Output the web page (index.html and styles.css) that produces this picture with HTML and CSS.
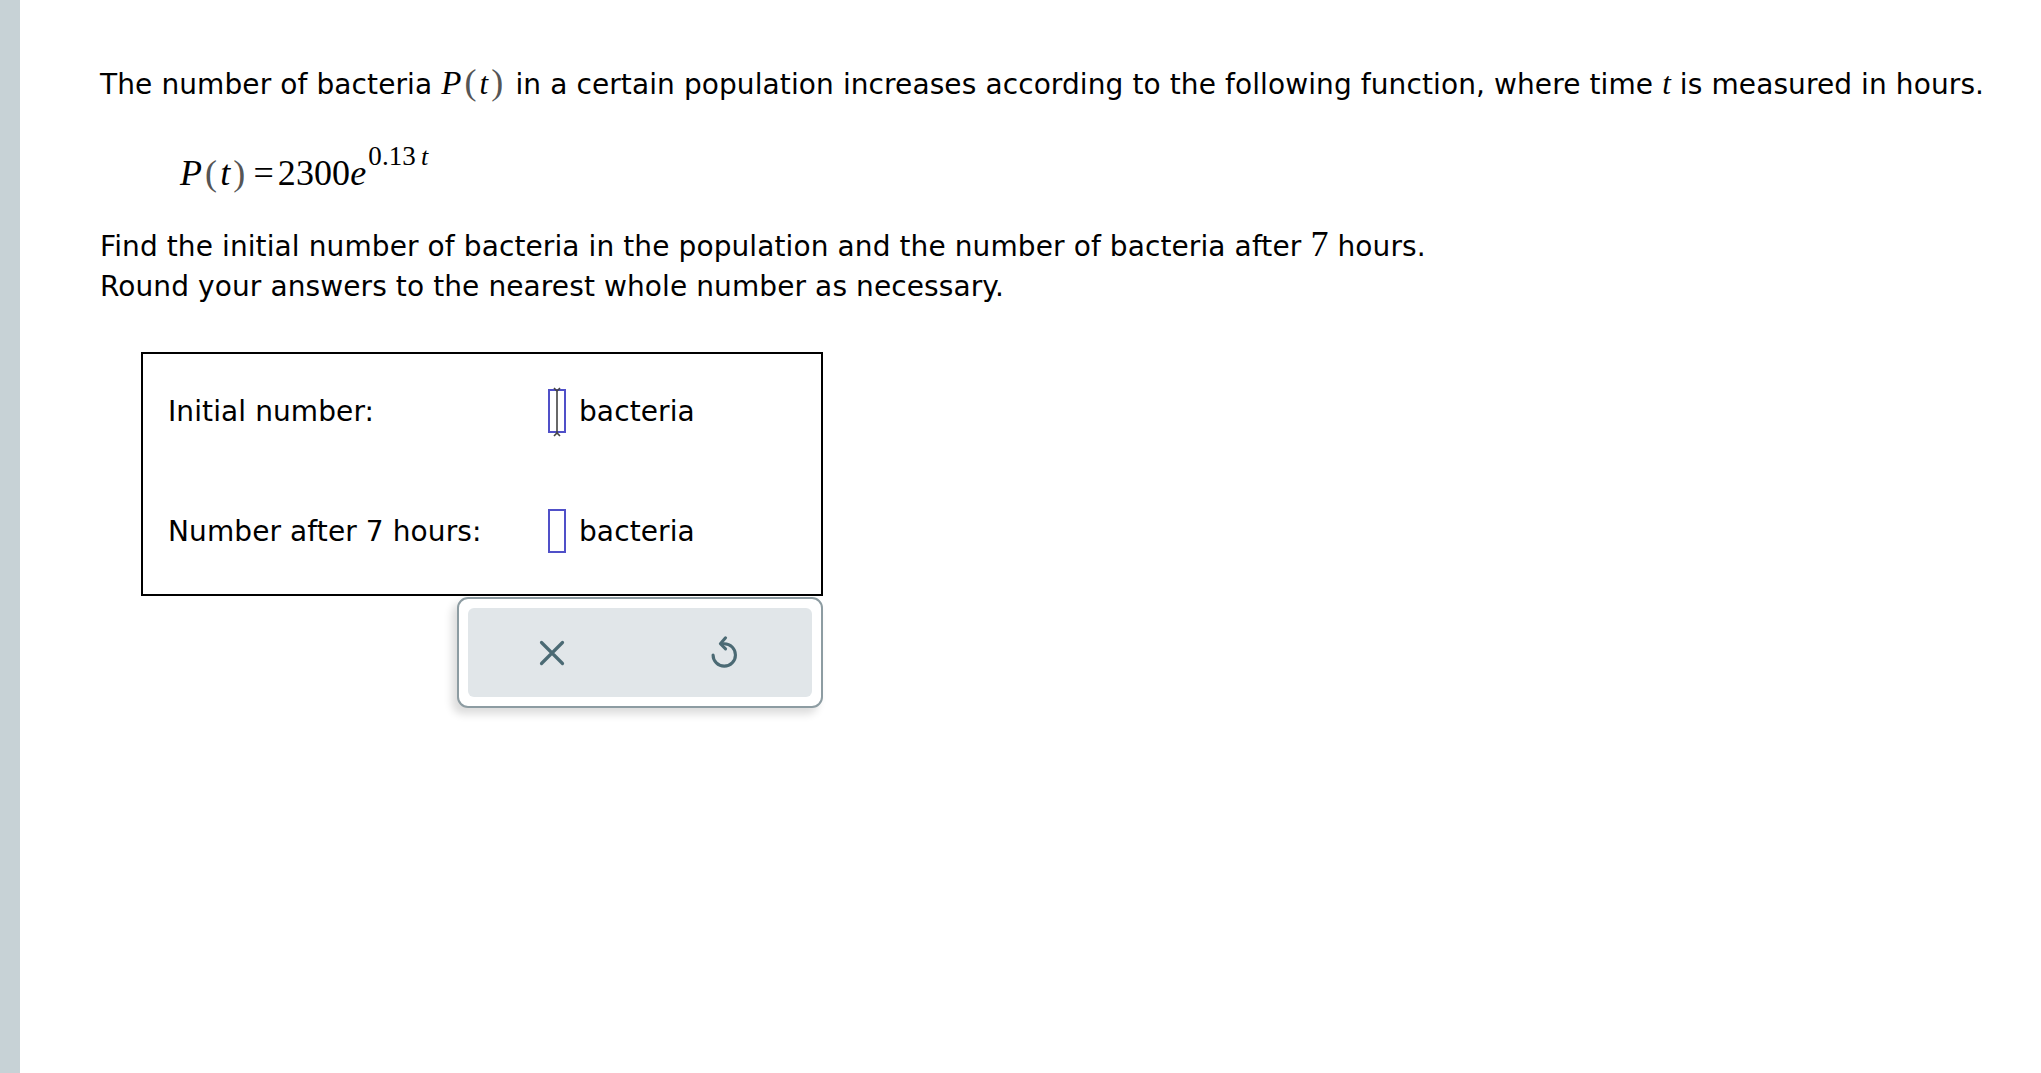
FILE: index.html
```html
<!DOCTYPE html>
<html>
<head>
<meta charset="utf-8">
<link rel="stylesheet" href="styles.css">
</head>
<body>
<div class="sidebar"></div>
<main class="content">
  <p class="line first">The number of bacteria <span class="mi">P</span><span class="paren">(</span><span class="mi t">t</span><span class="paren">)</span> in a certain population increases according to the following function, where time <span class="mi t">t</span> is measured in hours.</p>
  <div class="equation"><span class="eq"><span class="mi">P</span><span class="eparen">(</span><span class="mi">t</span><span class="eparen">)</span><span class="eqsign">=</span>2300<span class="mi">e</span><sup class="sup">0.13<span class="mi">t</span></sup></span></div>
  <p class="line find">Find the initial number of bacteria in the population and the number of bacteria after <span class="mn">7</span> hours.</p>
  <p class="line">Round your answers to the nearest whole number as necessary.</p>
  <div class="answer-area">
    <div class="answer-box">
      <div class="row">
        <span class="label">Initial number:</span>
        <span class="field"><span class="input"></span><svg class="ibeam" width="12" height="50" viewBox="0 0 12 50"><path d="M3 1 L6 4 L9 1 M6 4 V46 M3 49 L6 46 L9 49" stroke="#444" stroke-width="1.6" fill="none"/></svg></span>
        <span class="unit">bacteria</span>
      </div>
      <div class="row">
        <span class="label">Number after 7 hours:</span>
        <span class="field"><span class="input"></span></span>
        <span class="unit">bacteria</span>
      </div>
    </div>
    <div class="panel">
      <div class="panel-inner">
        <button class="btn" aria-label="Clear"><svg width="26" height="26" viewBox="0 0 26 26"><path d="M2.5 2.5 L23.5 23.5 M23.5 2.5 L2.5 23.5" stroke="#4b6a74" stroke-width="3.2" stroke-linecap="round" fill="none"/></svg></button>
        <button class="btn" aria-label="Undo"><svg width="36" height="36" viewBox="0 0 28 28"><path d="M5.5 15.5 A8.7 8.7 0 1 0 14.2 6.8 L12 6.8" stroke="#4b6a74" stroke-width="2.4" stroke-linecap="round" fill="none"/><path d="M15.2 2.2 L11.2 6.8 L15.2 10.8" stroke="#4b6a74" stroke-width="2.4" stroke-linecap="round" stroke-linejoin="round" fill="none"/></svg></button>
      </div>
    </div>
  </div>
</main>
</body>
</html>
```
FILE: styles.css
```css
html, body {
  margin: 0;
  padding: 0;
  background: #ffffff;
}
body {
  display: flex;
  min-height: 1073px;
  font-family: "DejaVu Sans", Verdana, sans-serif;
  font-size: 28px;
  letter-spacing: 0.1px;
  color: #000;
}
.sidebar {
  width: 20px;
  flex: 0 0 20px;
  background: #c7d2d6;
}
.content {
  padding: 62px 0 0 80px;
  flex: 1;
}
.line {
  margin: 0;
  line-height: 40px;
  white-space: nowrap;
}
.mi {
  font-family: "Liberation Serif", "Times New Roman", serif;
  font-style: italic;
  font-size: 33px;
}
.t { font-size: 31px; }
.paren {
  font-family: "Liberation Serif", serif;
  font-size: 36px;
  color: #555;
  margin: 0 3px;
}
.mn {
  font-family: "Liberation Serif", serif;
  font-size: 36px;
}
.equation {
  height: 126px;
  padding-left: 80px;
  padding-top: 35px;
  box-sizing: border-box;
}
.eq {
  font-family: "Liberation Serif", "Times New Roman", serif;
  font-size: 36px;
  display: inline-block;
  line-height: 46px;
}
.eq .mi { font-size: 36px; }
.eparen { color: #555; margin: 0 3px; }
.eqsign { margin: 0 4px 0 5px; }
.sup {
  font-size: 27px;
  position: relative;
  top: -7px;
  margin-left: 2px;
}
.sup .mi { font-size: 26px; margin-left: 5px; }
.find { margin-top: -7px; }
.answer-area {
  margin: 45px 0 0 41px;
  width: 682px;
  display: flex;
  flex-direction: column;
}
.answer-box {
  border: 2px solid #000;
  height: 244px;
  box-sizing: border-box;
  padding: 34px 0 0 25px;
  display: flex;
  flex-direction: column;
  gap: 74px;
}
.row {
  display: flex;
  align-items: center;
  height: 46px;
}
.label { width: 380px; }
.field {
  position: relative;
  display: inline-flex;
  align-items: center;
  width: 23px;
}
.input {
  width: 14px;
  height: 40px;
  border: 2px solid #5050c8;
  display: inline-block;
}
.ibeam {
  position: absolute;
  left: 3px;
  top: -2px;
}
.unit { margin-left: 8px; }
.panel {
  align-self: flex-end;
  margin-top: 1px;
  width: 366px;
  height: 111px;
  box-sizing: border-box;
  border: 2px solid #8d9ca2;
  border-radius: 11px;
  background: #fff;
  padding: 9px;
  box-shadow: -5px 6px 9px rgba(0,0,0,0.14);
}
.panel-inner {
  background: #e1e6e9;
  border-radius: 6px;
  height: 100%;
  display: flex;
  align-items: center;
  padding-left: 54px;
  gap: 112px;
}
.btn {
  border: none;
  background: transparent;
  padding: 0;
  width: 60px;
  height: 60px;
  display: flex;
  align-items: center;
  justify-content: center;
}
```
